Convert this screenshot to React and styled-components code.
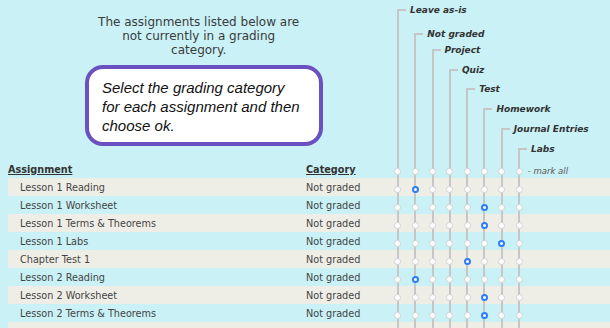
import React from "react";
import styled, {createGlobalStyle} from "styled-components";

const GlobalStyle = createGlobalStyle`
  html, body {
    margin: 0;
    padding: 0;
    background: #c9f1f6;
  }
`;

const categories = [
  {label: "Leave as-is", top: 4},
  {label: "Not graded", top: 28},
  {label: "Project", top: 44},
  {label: "Quiz", top: 64},
  {label: "Test", top: 83},
  {label: "Homework", top: 103},
  {label: "Journal Entries", top: 123},
  {label: "Labs", top: 143},
];

const assignments = [
  {name: "Lesson 1 Reading", pick: 1},
  {name: "Lesson 1 Worksheet", pick: 5},
  {name: "Lesson 1 Terms & Theorems", pick: 5},
  {name: "Lesson 1 Labs", pick: 6},
  {name: "Chapter Test 1", pick: 4},
  {name: "Lesson 2 Reading", pick: 1},
  {name: "Lesson 2 Worksheet", pick: 5},
  {name: "Lesson 2 Terms & Theorems", pick: 5},
];

const COL = "17.3px";

const Page = styled.div`
    padding-left: 8px;
    width: 602px;
    height: 328px;
    overflow: hidden;
    font-family: "DejaVu Sans", Verdana, sans-serif;
`;

const Top = styled.div`
    display: flex;
    height: 160px;
`;

const Intro = styled.div`
    width: 381.35px;
    display: flex;
    flex-direction: column;
    align-items: center;
    padding-top: 15px;
    box-sizing: border-box;
`;

const Notice = styled.p`
    margin: 0;
    font-size: 12px;
    line-height: 14px;
    color: #3b3b3b;
    text-align: center;
`;

const Callout = styled.div`
    align-self: flex-start;
    margin-left: 77px;
    margin-top: 8px;
    width: 238px;
    box-sizing: border-box;
    border: 4px solid #6a50c1;
    border-radius: 18px;
    background: #ffffff;
    padding: 9px 8px 7px 13px;
    font-family: "Liberation Sans", Arial, sans-serif;
    font-style: italic;
    font-size: 15px;
    line-height: 19px;
    color: #111;
    white-space: nowrap;
`;

const Legend = styled.div`
    display: flex;
`;

const LegendColumn = styled.div`
    width: ${COL};
    display: flex;
    flex-direction: column;
    padding-top: ${p => p.$top}px;
`;

const LegendHead = styled.div`
    display: flex;
    align-items: center;
    gap: 4px;
    height: 11px;
    margin-left: calc(50% - 1px);
    white-space: nowrap;
`;

const Tick = styled.span`
    width: 9px;
    height: 2px;
    background: #c6c6c6;
    flex-shrink: 0;
`;

const LegendLabel = styled.span`
    font-size: 9px;
    font-weight: bold;
    font-style: italic;
    color: #333;
`;

const Stem = styled.div`
    flex: 1;
    margin-top: -5px;
    margin-left: calc(50% - 1px);
    border-left: 2px solid #c6c6c6;
`;

const Row = styled.div`
    display: grid;
    grid-template-columns: 298px 83.35px repeat(8, ${COL}) 1fr;
    height: 18px;
    background: ${p => (p.$shade ? "#efeee6" : "transparent")};
    font-size: 9.7px;
    color: #444;
`;

const Cell = styled.div`
    display: flex;
    align-items: center;
    padding-left: ${p => p.$indent || 0}px;
    white-space: nowrap;
`;

const HeadCell = styled(Cell)`
    font-weight: bold;
    color: #333;
    text-decoration: underline;
`;

const RadioCell = styled.div`
    display: flex;
    align-items: center;
    justify-content: center;
    padding-top: 4px;
    box-sizing: border-box;
    background: linear-gradient(#c6c6c6, #c6c6c6) center / 2px 100% no-repeat;
`;

const Dot = styled.span`
    width: 7px;
    height: 7px;
    box-sizing: border-box;
    border-radius: 50%;
    background: #fff;
    border: ${p => (p.$on ? "2.4px solid #2f7cf5" : "1px solid #d2d2d2")};
`;

const MarkAll = styled.div`
    display: flex;
    align-items: center;
    padding: 3px 0 0 0;
    font-size: 8.5px;
    font-style: italic;
    color: #555;
`;

const App = () => {
  return (<Page>
    <GlobalStyle/>
    <Top>
      <Intro>
        <Notice>The assignments listed below are<br/>not currently in a grading<br/>category.</Notice>
        <Callout>Select the grading category<br/>for each assignment and then<br/>choose ok.</Callout>
      </Intro>
      <Legend>
        {categories.map(c => (
          <LegendColumn key={c.label} $top={c.top}>
            <LegendHead><Tick/><LegendLabel>{c.label}</LegendLabel></LegendHead>
            <Stem/>
          </LegendColumn>
        ))}
      </Legend>
    </Top>
    <Row>
      <HeadCell>Assignment</HeadCell>
      <HeadCell>Category</HeadCell>
      {categories.map(c => <RadioCell key={c.label}><Dot/></RadioCell>)}
      <MarkAll>- mark all</MarkAll>
    </Row>
    {assignments.map((a, i) => (
      <Row key={a.name} $shade={i % 2 === 0}>
        <Cell $indent={12}>{a.name}</Cell>
        <Cell>Not graded</Cell>
        {categories.map((c, j) => <RadioCell key={c.label}><Dot $on={j === a.pick}/></RadioCell>)}
        <Cell/>
      </Row>
    ))}
    <Row $shade>
      <Cell/>
      <Cell/>
      {categories.map(c => <RadioCell key={c.label}/>)}
      <Cell/>
    </Row>
  </Page>);
};

export default App;
